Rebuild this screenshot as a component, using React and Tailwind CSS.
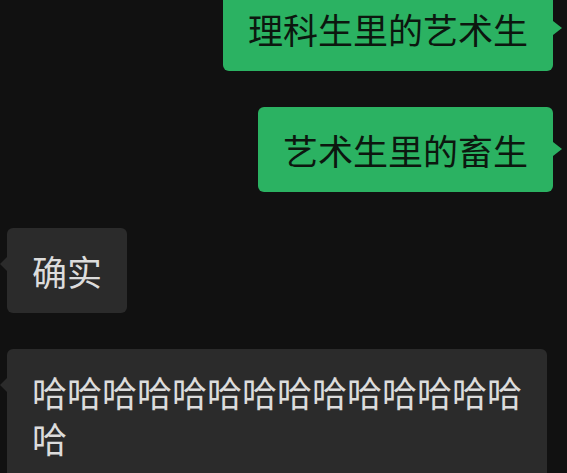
import React from "react";

const messages = [
  { side: "right", text: "理科生里的艺术生" },
  { side: "right", text: "艺术生里的畜生" },
  { side: "left", text: "确实" },
  { side: "left", text: "哈哈哈哈哈哈哈哈哈哈哈哈哈哈哈" },
];

const Bubble = ({ side, text }) => {
  const mine = side === "right";
  return (
    <div className={mine ? "flex justify-end" : "flex justify-start"}>
      <div
        className={
          mine
            ? "relative max-w-[540px] rounded-md bg-[#2bb262] px-[25px] py-[19.5px] text-[#0c170f]"
            : "relative max-w-[540px] rounded-md bg-[#2b2b2b] px-[25px] py-[19.5px] text-[#dcdcdc]"
        }
      >
        {mine ? (
          <span className="absolute right-[-9px] top-[35px] h-0 w-0 border-y-[7px] border-l-[9px] border-y-transparent border-l-[#2bb262]" />
        ) : (
          <span className="absolute left-[-7px] top-[29px] h-0 w-0 border-y-[7px] border-r-[7px] border-y-transparent border-r-[#2b2b2b]" />
        )}
        <p className="m-0 text-[35px] leading-[46px] break-all">{text}</p>
      </div>
    </div>
  );
};

export default function App() {
  return (
    <div
      className="h-[473px] w-[567px] overflow-hidden bg-[#111111] pl-[7px] pr-[14px]"
      style={{ fontFamily: '"Noto Sans CJK SC", "Noto Sans", sans-serif' }}
    >
      <div className="mt-[-14px] flex flex-col gap-[36px]">
        {messages.map((m, i) => (
          <Bubble key={i} side={m.side} text={m.text} />
        ))}
      </div>
    </div>
  );
}
